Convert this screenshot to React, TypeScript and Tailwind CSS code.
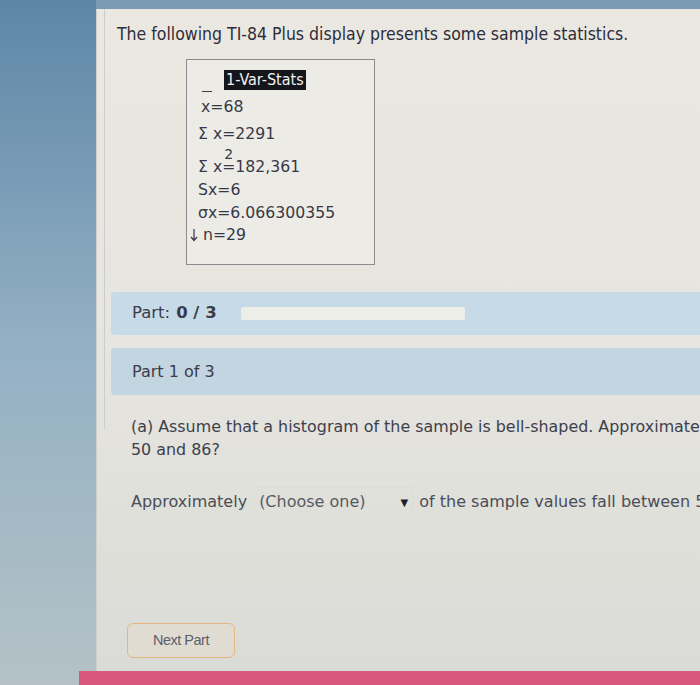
import React from 'react';

const sans = { fontFamily: '"DejaVu Sans", Verdana, sans-serif' };
const cond = { fontFamily: '"DejaVu Sans Condensed", "DejaVu Sans", Verdana, sans-serif', fontStretch: 'condensed' as const };
const arial = { fontFamily: '"Liberation Sans", Arial, sans-serif' };

function StatsBox() {
  return (
    <div
      className="ml-[89px] mt-[14px] w-[189px] h-[206px] border border-[#8a8c90] bg-[#ecebe6] pl-[11px] pt-[8px] text-[15.7px] text-[#373947]"
      style={sans}
    >
      <div className="ml-[26px] inline-block bg-[#15161c] px-[2px] text-[#f2f2f2] leading-[20px] text-[16px]" style={cond}>
        1-Var-Stats
      </div>
      <div className="mt-[3px] h-[23px] leading-[23px]">
        <span className="relative inline-block ml-[3px]">
          <span className="absolute left-[1px] top-[-4px] w-[10px] h-[1.5px] bg-[#373947]" />x
        </span>
        =68
      </div>
      <div className="mt-[4px] h-[23px] leading-[23px]">
        <span className="mr-[5px]">Σ</span>x=2291
      </div>
      <div className="mt-[10px] h-[23px] leading-[23px]">
        <span className="mr-[5px]">Σ</span>x
        <span className="relative inline-block w-0 top-[-13px] left-[2px] text-[14px] leading-[12px]">2</span>
        =182,361
      </div>
      <div className="h-[23px] leading-[23px]">Sx=6</div>
      <div className="h-[23px] leading-[23px]">σx=6.066300355</div>
      <div className="h-[23px] leading-[20px] ml-[-11px] flex items-center">
        <svg width="12" height="14" viewBox="0 0 12 14" className="ml-[1px] mr-[3px]">
          <path d="M6 1 V12 M3 9 L6 12.5 L9 9" stroke="#373947" strokeWidth="1.2" fill="none" />
        </svg>
        n=29
      </div>
    </div>
  );
}

export default function App() {
  return (
    <div className="w-[700px] h-[685px] flex overflow-hidden bg-[#a9bac4]">
      <div className="w-[96px] shrink-0 h-full bg-gradient-to-b from-[#5d86a6] via-[#93b0c4] to-[#b4c2c6]" />
      <div className="flex-1 min-w-0 flex flex-col">
        <div className="h-[9px] bg-[#7b9bb5] shrink-0" />
        <div className="flex-1 flex flex-col border-l border-[#cfcfcf] bg-gradient-to-b from-[#ebe7e1] via-[#e7e5df] to-[#d9dbd6] relative">
          <div className="absolute left-[7px] top-0 h-[420px] w-px bg-[#c9ccd0]" />
          <div className="pl-[20px] pt-[14px] text-[17.5px] leading-[22px] text-[#2c2e3a] whitespace-nowrap" style={cond}>
            The following TI-84 Plus display presents some sample statistics.
          </div>
          <StatsBox />

          <div
            className="ml-[14px] mt-[27px] h-[43px] rounded-l-[4px] bg-[#c6dbe7] flex items-center pl-[21px] text-[16.5px] text-[#3a3c49]"
            style={sans}
          >
            <span>Part:</span>
            <span className="ml-[6px] font-bold">0 / 3</span>
            <div className="ml-[24px] w-[224px] h-[13px] bg-[#eeeee9] rounded-[2px]" />
          </div>

          <div
            className="ml-[14px] mt-[13px] h-[47px] rounded-l-[4px] bg-[#c3d5e0] flex items-center pl-[21px] text-[16px] text-[#3a3c49]"
            style={sans}
          >
            Part 1 of 3
          </div>

          <div className="pl-[34px] pt-[20px] text-[15.9px] leading-[23px] text-[#3d3f4c] whitespace-nowrap" style={sans}>
            <div>(a) Assume that a histogram of the sample is bell-shaped. Approximately</div>
            <div>50 and 86?</div>
          </div>

          <div className="pl-[34px] mt-[26px] flex items-center text-[16px] text-[#4a4d58] whitespace-nowrap" style={sans}>
            <span>Approximately</span>
            <div className="ml-[6px] flex items-center h-[30px] border border-[#dedcd6] pl-[5px] pr-[4px]">
              <span className="text-[#575a63]">(Choose one)</span>
              <span className="ml-[35px] text-[10px] text-[#1d1f27]">▼</span>
            </div>
            <span className="ml-[6px]">of the sample values fall between 50</span>
          </div>

          <div className="pl-[30px] mt-[106px]">
            <div
              className="w-[108px] h-[35px] rounded-[6px] border border-[#e5b77f] bg-[#e1dcd2] flex items-center justify-center text-[14.5px] text-[#5c5e6a] tracking-[-0.5px]"
              style={arial}
            >
              Next Part
            </div>
          </div>

          <div className="mt-auto h-[14px] bg-[#d8587b] -ml-[18px]" />
        </div>
      </div>
    </div>
  );
}
